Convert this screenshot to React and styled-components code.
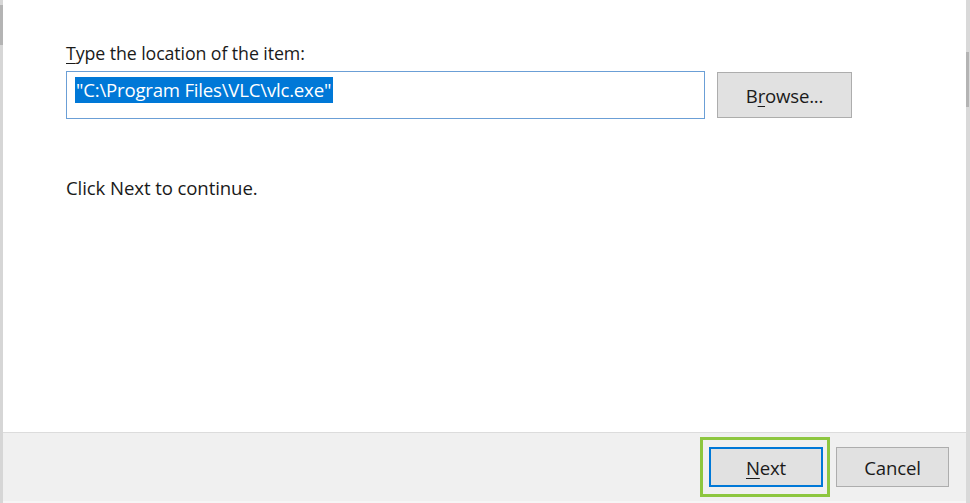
import React from 'react'
import styled, { createGlobalStyle } from 'styled-components'

const Global = createGlobalStyle`
	html, body {
		margin: 0;
		padding: 0;
		background: #ffffff;
	}
	body {
		font-family: "Open Sans", "Noto Sans", sans-serif;
		color: #1a1a1a;
	}
`

const Window = styled.div`
	width: 970px;
	height: 503px;
	box-sizing: border-box;
	display: flex;
	flex-direction: column;
	background: #ffffff;
	border-left: 3px solid #d6d6d6;
	border-right: 4px solid #d9d9d9;
	position: relative;
`

const ScrollThumb = styled.div`
	position: absolute;
	top: ${p => p.top}px;
	height: ${p => p.size}px;
	width: 3px;
	background: #b4b4b4;
	${p => p.side}: -3px;
`

const Body = styled.div`
	flex: 1;
	padding: 41px 0 0 63px;
	display: flex;
	flex-direction: column;
`

const Label = styled.div`
	font-size: 17.8px;
	line-height: 24px;
	letter-spacing: -0.1px;
`

const Key = styled.span`
	text-decoration: underline;
	text-underline-offset: 3px;
	text-decoration-thickness: 1px;
`

const Row = styled.div`
	display: flex;
	align-items: flex-start;
	gap: 12px;
	margin-top: 6px;
`

const Field = styled.div`
	width: 639px;
	height: 48px;
	box-sizing: border-box;
	border: 1px solid #6b9fd6;
	padding: 5px 0 0 8px;
	display: flex;
	align-items: flex-start;
`

const Selected = styled.span`
	background: #0078d7;
	color: #ffffff;
	font-size: 18.6px;
	line-height: 26px;
	padding: 0 2px 0 1px;
	letter-spacing: -0.2px;
`

const Button = styled.button`
	width: ${p => p.w}px;
	height: ${p => p.h}px;
	margin-top: ${p => p.top || 0}px;
	box-sizing: border-box;
	background: #e1e1e1;
	border: ${p => p.primary ? '2px solid #0078d7' : '1px solid #adadad'};
	font-family: inherit;
	font-size: 18.6px;
	color: #1a1a1a;
	padding: 0;
	display: flex;
	align-items: center;
	justify-content: center;
	letter-spacing: -0.2px;
`

const Note = styled.div`
	font-size: 18.6px;
	line-height: 24px;
	margin-top: 57px;
	letter-spacing: -0.1px;
`

const Footer = styled.div`
	height: 68px;
	background: #f0f0f0;
	border-top: 1px solid #dcdcdc;
	border-bottom: 2px solid #f6f6f6;
	display: flex;
	align-items: center;
	justify-content: flex-end;
	padding-right: 17px;
	gap: 6px;
`

const Highlight = styled.div`
	box-sizing: border-box;
	width: 130px;
	height: 60px;
	border: 3px solid #8dc63f;
	display: flex;
	align-items: center;
	justify-content: center;
	padding-left: 2px;
`

export default function App() {
	return (
		<>
			<Global />
			<Window>
				<ScrollThumb side="left" top={5} size={40} />
				<ScrollThumb side="right" top={52} size={55} />
				<Body>
					<Label><Key>T</Key>ype the location of the item:</Label>
					<Row>
						<Field>
							<Selected>"C:\Program Files\VLC\vlc.exe"</Selected>
						</Field>
						<Button w={135} h={46} top={1}>B<Key>r</Key>owse...</Button>
					</Row>
					<Note>Click Next to continue.</Note>
				</Body>
				<Footer>
					<Highlight>
						<Button primary w={114} h={40}><Key>N</Key>ext</Button>
					</Highlight>
					<Button w={113} h={40}>Cancel</Button>
				</Footer>
			</Window>
		</>
	)
}
